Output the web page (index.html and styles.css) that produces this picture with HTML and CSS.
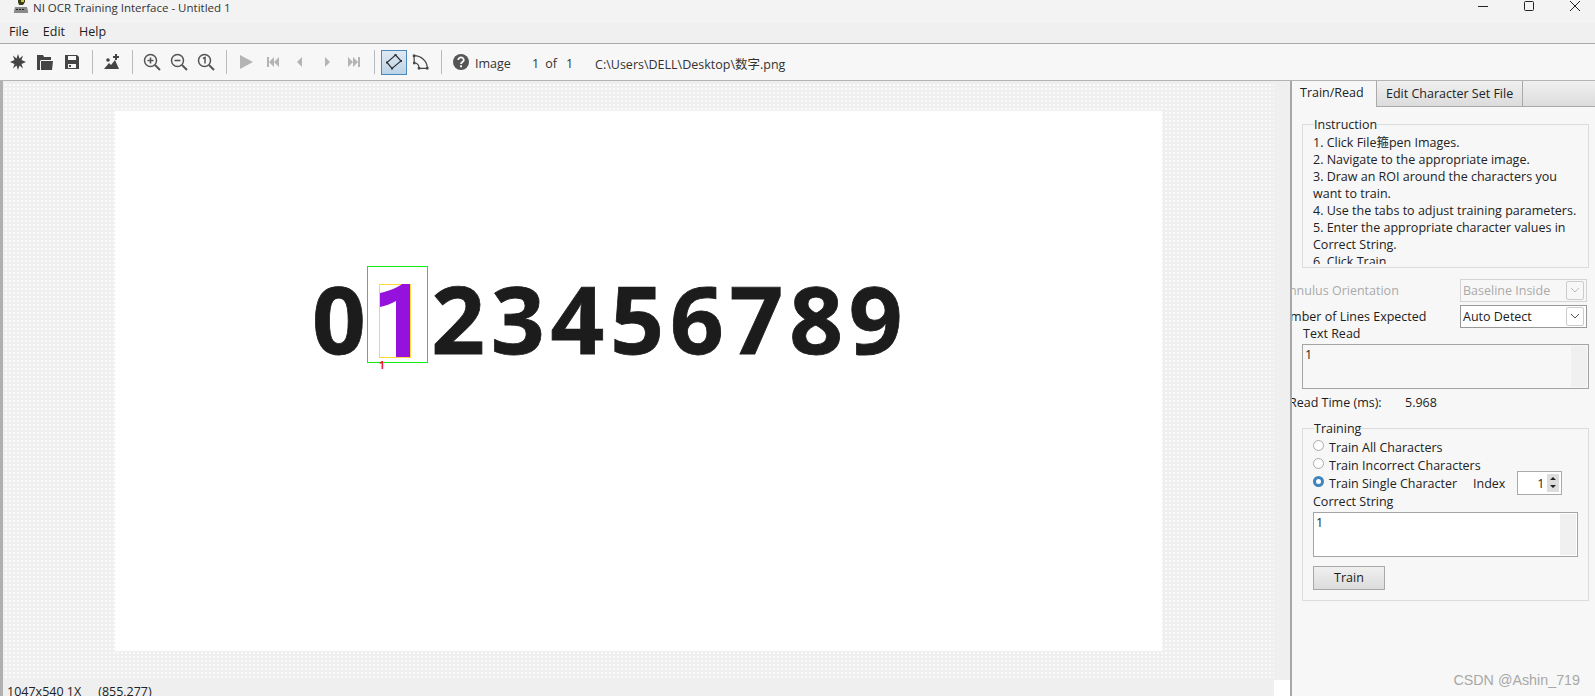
FILE: index.html
```html
<!DOCTYPE html>
<html lang="en">
<head>
    <meta charset="UTF-8">
    <title>NI OCR Training Interface - Untitled 1</title>
    <link rel="stylesheet" href="styles.css">
</head>
<body>
    <!-- title bar -->
    <div class="titlebar">
        <svg class="app-icon" width="16" height="15" viewBox="0 0 16 15">
            <path d="M5 0h7v3l-2 3H6L5 3z" fill="#3a3a1c"/>
            <path d="M8 0h3v3H8z" fill="#d8c030"/>
            <path d="M2 8h12l1 4v2H1v-2z" fill="#8a8a8a"/>
            <path d="M3 10h2v1H3zM6 10h2v1H6zM9 10h2v1H9z" fill="#222"/>
        </svg>
        <span class="title-text">NI OCR Training Interface - Untitled 1</span>
        <div class="win-buttons">
            <svg width="12" height="12" viewBox="0 0 12 12"><path d="M1 6.5h10" stroke="#222" fill="none"/></svg>
            <svg width="12" height="12" viewBox="0 0 12 12"><rect x="1.5" y="1.5" width="9" height="9" rx="1" stroke="#222" fill="none"/></svg>
            <svg width="12" height="12" viewBox="0 0 12 12"><path d="M1 1l10 10M11 1L1 11" stroke="#222" fill="none"/></svg>
        </div>
    </div>

    <!-- menu -->
    <div class="menubar">
        <span>File</span>
        <span>Edit</span>
        <span>Help</span>
    </div>

    <!-- toolbar -->
    <div class="toolbar">
        <svg class="tool" viewBox="0 0 18 18"><path d="M9 1l1.500 4.500L14 2.500l-1.500 4.500L17 9l-4.500 2L14 15.500 10.500 12.500 9 17l-1.500-4.500L4 15.500 5.500 11 1 9l4.500-2L4 2.500l3.500 3z" fill="#444"/></svg>
        <svg class="tool" viewBox="0 0 18 18"><path d="M1 2h6l1 2h7v3H5l-1 1v9H1zM5 8h12l-1 9H5z" fill="#444"/></svg>
        <svg class="tool" viewBox="0 0 18 18"><path d="M2 2h12l2 2v12H2z" fill="#444"/><path d="M5 3h8v4H5z" fill="#f7f7f7"/><path d="M5 11h8v4H5z" fill="#f7f7f7"/><path d="M6 12h2v2H6z" fill="#444"/></svg>
        <i class="sep"></i>
        <svg class="tool" viewBox="0 0 18 18"><circle cx="5" cy="7" r="1.800" fill="#444"/><path d="M1 16l5-6 2 2 4-5 4 9z" fill="#444"/><path d="M13 1v6M10 4h6" stroke="#444" stroke-width="2"/></svg>
        <i class="sep"></i>
        <svg class="tool" viewBox="0 0 18 18"><circle cx="7.500" cy="7.500" r="6" fill="none" stroke="#555" stroke-width="1.500"/><path d="M12 12l5 5" stroke="#555" stroke-width="2"/><path d="M7.500 4.500v6M4.500 7.500h6" stroke="#555" stroke-width="1.600"/></svg>
        <svg class="tool" viewBox="0 0 18 18"><circle cx="7.500" cy="7.500" r="6" fill="none" stroke="#555" stroke-width="1.500"/><path d="M12 12l5 5" stroke="#555" stroke-width="2"/><path d="M4.500 7.500h6" stroke="#555" stroke-width="1.600"/></svg>
        <svg class="tool" viewBox="0 0 18 18"><circle cx="7.500" cy="7.500" r="6" fill="none" stroke="#555" stroke-width="1.500"/><path d="M12 12l5 5" stroke="#555" stroke-width="2"/><path d="M6 5.500l2-1v6" fill="none" stroke="#555" stroke-width="1.500"/></svg>
        <i class="sep"></i>
        <svg class="tool" viewBox="0 0 18 18"><path d="M3 2l13 7-13 7z" fill="#b4b4b4"/></svg>
        <svg class="tool" viewBox="0 0 18 18"><path d="M3 4h2v10H3zM10 4v10L5 9zM15 4v10L10 9z" fill="#b4b4b4"/></svg>
        <svg class="tool" viewBox="0 0 18 18"><path d="M11 4v10L6 9z" fill="#b4b4b4"/></svg>
        <svg class="tool" viewBox="0 0 18 18"><path d="M7 4v10l5-5z" fill="#b4b4b4"/></svg>
        <svg class="tool" viewBox="0 0 18 18"><path d="M3 4v10l5-5zM8 4v10l5-5zM13 4h2v10h-2z" fill="#b4b4b4"/></svg>
        <i class="sep sep-tight"></i>
        <span class="tool-active">
            <svg width="18" height="18" viewBox="0 0 18 18"><path d="M10.500 2L16 8 7 15.500 2 9.500z" fill="none" stroke="#333" stroke-width="1.200"/><path d="M9.500 1h2v2h-2zM15 7h2v2h-2zM6 14.500h2v2H6zM1 8.500h2v2H1z" fill="#333"/></svg>
        </span>
        <svg class="tool roi" viewBox="0 0 18 18"><path d="M2 2.700C9 2.700 15.300 8 15.300 15.300H7C7 12 5 10 2.300 10z" fill="none" stroke="#444" stroke-width="1.200"/><path d="M.8 1.500h2.400v2.400H.8zM14.100 14.100h2.400v2.400h-2.400zM5.800 14.100h2.400v2.400H5.800zM1.100 8.800h2.400v2.400H1.100z" fill="#444"/></svg>
        <i class="sep"></i>
        <svg class="tool help" viewBox="0 0 18 18"><circle cx="9" cy="9" r="8" fill="#555"/><path d="M6.200 7c0-3.400 5.600-3.400 5.600 0 0 2-2.800 2-2.800 4" fill="none" stroke="#f7f7f7" stroke-width="1.800"/><path d="M8 12.300h2v2H8z" fill="#f7f7f7"/></svg>
        <span class="tool-label image-label">Image</span>
        <span class="tool-label count">1</span>
        <span class="tool-label of">of</span>
        <span class="tool-label count">1</span>
        <span class="tool-label path">C:\Users\DELL\Desktop\数字.png</span>
    </div>

    <div class="main">
        <!-- image view -->
        <div class="viewer">
            <div class="canvas">
                <div class="picture">
                    <span class="digits">0<span class="digit-hidden">1</span>23456789</span>
                    <div class="roi-box"></div>
                    <div class="char-box"></div>
                    <svg class="char-hit" width="30" height="73" viewBox="0 0 30 73"><path d="M0 9C9 7 17 4 22 0H30V73H16V17C11 20 5 22 0 23z" fill="#9512dc"/></svg>
                    <span class="char-index">1</span>
                </div>
            </div>
            <div class="statusbar">
                <span>1047x540 1X</span>
                <span>(855,277)</span>
                <i class="status-corner"></i>
            </div>
        </div>

        <!-- right panel -->
        <div class="panel">
            <div class="tabs">
                <span class="tab tab-on">Train/Read</span>
                <span class="tab">Edit Character Set File</span>
                <span class="tab-rest"></span>
            </div>

            <fieldset class="group instruction">
                <legend>Instruction</legend>
                <div class="instruction-text">
                    1. Click File箍pen Images.<br>
                    2. Navigate to the appropriate image.<br>
                    3. Draw an ROI around the characters you want to train.<br>
                    4. Use the tabs to adjust training parameters.<br>
                    5. Enter the appropriate character values in Correct String.<br>
                    6. Click Train.
                </div>
            </fieldset>

            <div class="row row-annulus">
                <span class="clip-label dim"><span class="clip-annulus">Annulus Orientation</span></span>
                <div class="combo combo-off">Baseline Inside<b class="combo-btn"><svg width="10" height="6" viewBox="0 0 10 6"><path d="M1 1l4 4 4-4" fill="none" stroke="#bbb"/></svg></b></div>
            </div>
            <div class="row row-lines">
                <span class="clip-label"><span class="clip-lines">Number of Lines Expected</span></span>
                <div class="combo">Auto Detect<b class="combo-btn"><svg width="10" height="6" viewBox="0 0 10 6"><path d="M1 1l4 4 4-4" fill="none" stroke="#555"/></svg></b></div>
            </div>

            <div class="field-label text-read-label">Text Read</div>
            <div class="textbox text-read">1<i class="scroll"></i></div>
            <div class="read-time">
                <span class="clip-label"><span class="clip-read">Read Time (ms):</span></span>
                <span class="read-value">5.968</span>
            </div>

            <fieldset class="group training">
                <legend>Training</legend>
                <div class="radio-row"><i class="radio"></i>Train All Characters</div>
                <div class="radio-row"><i class="radio"></i>Train Incorrect Characters</div>
                <div class="radio-row">
                    <i class="radio radio-on"></i>Train Single Character
                    <span class="index-label">Index</span>
                    <div class="spin">1<b class="spin-btns"><svg width="12" height="18" viewBox="0 0 12 18"><path d="M0 0h12v18H0z" fill="#ddd"/><path d="M3 6l3-3 3 3zM3 11h6l-3 3z" fill="#222"/></svg></b></div>
                </div>
                <div class="field-label correct-label">Correct String</div>
                <div class="textbox correct">1<i class="scroll"></i></div>
                <div class="button">Train</div>
            </fieldset>
            <div class="watermark">CSDN @Ashin_719</div>
        </div>
    </div>
</body>
</html>
```

FILE: styles.css
```css
/* base */
html, body {
    height: 100%;
}

body {
    margin: 0;
    width: 1595px;
    height: 696px;
    overflow: hidden;
    display: flex;
    flex-direction: column;
    font-family: "Open Sans", "Noto Sans CJK SC", sans-serif;
    font-size: 12.5px;
    color: #1c1c1c;
    background: #f7f7f7;
}

/* title bar */
.titlebar {
    height: 23px;
    flex: none;
    display: flex;
    align-items: flex-start;
    background: #f3f3f3;
    overflow: hidden;
}

.app-icon {
    margin: -1px 0 0 13px;
}

.title-text {
    margin-left: 4px;
    font-size: 11.5px;
    color: #333;
    line-height: 15px;
}

.win-buttons {
    margin-left: auto;
    display: flex;
    gap: 34px;
    padding: 0 14px 0 0;
}

/* menu */
.menubar {
    height: 20px;
    flex: none;
    display: flex;
    gap: 14px;
    padding-left: 9px;
    line-height: 18px;
    background: #f0f0f0;
    border-bottom: 1px solid #aaa;
}

/* toolbar */
.toolbar {
    height: 36px;
    flex: none;
    display: flex;
    align-items: center;
    padding-left: 9px;
    background: #f7f7f7;
    border-bottom: 1px solid #b4b4b4;
}

.tool {
    width: 18px;
    height: 18px;
    margin-right: 9px;
    flex: none;
}

.sep {
    width: 1px;
    height: 24px;
    margin: 0 10px 0 2px;
    background: #b8bcc0;
    flex: none;
}

.sep-tight {
    margin-right: 6px;
}

.tool-active {
    width: 26px;
    height: 25px;
    margin-right: 5px;
    display: flex;
    align-items: center;
    justify-content: center;
    box-sizing: border-box;
    background: linear-gradient(#dfe9f3, #bcd3e8);
    border: 1px solid #4d88bd;
    flex: none;
}

.help {
    margin-right: 3px;
}

.tool-label {
    margin-top: 2px;
    color: #333;
    white-space: nowrap;
}

.image-label {
    margin-left: 2px;
    width: 57px;
}

.of {
    margin: 2px 9px 0 6px;
}

.path {
    margin-left: 22px;
}

/* main area */
.main {
    flex: 1;
    min-height: 0;
    display: flex;
}

.viewer {
    width: 1290px;
    flex: none;
    display: flex;
    flex-direction: column;
    box-sizing: border-box;
    border-left: 3px solid #b0b0b0;
    background: #efefef;
}

.canvas {
    flex: 1;
    min-height: 0;
    margin: 3px 16px 0 0;
    padding: 27px 0 0 112px;
    background-color: #efefef;
    background-image: conic-gradient(#fbfbfb 25%, transparent 0);
    background-size: 4px 4px;
}

.picture {
    position: relative;
    width: 1047px;
    height: 540px;
    background: #fff;
}

.digits {
    position: absolute;
    left: 197px;
    top: 167px;
    font-family: "Open Sans", sans-serif;
    font-weight: 700;
    font-size: 94px;
    letter-spacing: 5.9px;
    -webkit-text-stroke: 0.8px;
    line-height: 80px;
    color: #1c1c1c;
    white-space: nowrap;
}

.digit-hidden {
    color: transparent;
}

/* overlays on the picture */
.roi-box {
    position: absolute;
    left: 252px;
    top: 155px;
    width: 59px;
    height: 95px;
    border: 1px solid #0fec0f;
}

.char-box {
    position: absolute;
    left: 264px;
    top: 173px;
    width: 30px;
    height: 72px;
    border: 1px solid #ffd83a;
}

.char-hit {
    position: absolute;
    left: 265px;
    top: 173px;
}

.char-index {
    position: absolute;
    left: 264px;
    top: 248px;
    font-size: 10px;
    font-weight: 700;
    line-height: 12px;
    color: #f01818;
}

.statusbar {
    height: 16px;
    flex: none;
    display: flex;
    gap: 17px;
    padding-left: 4px;
    line-height: 23px;
    overflow: hidden;
    color: #222;
}

.status-corner {
    margin-left: auto;
    width: 16px;
    background: #fff;
}

/* right panel */
.panel {
    flex: 1;
    min-width: 0;
    position: relative;
    box-sizing: border-box;
    border-left: 2px solid #a8a8a8;
    background: #f7f7f7;
    overflow: hidden;
}

.tabs {
    height: 26px;
    display: flex;
    align-items: stretch;
    margin-top: 0;
}

.tab {
    padding: 0 9px;
    line-height: 26px;
    box-sizing: border-box;
    background: linear-gradient(#f0f0f0, #dcdcdc);
    border-right: 1px solid #aaa;
    border-bottom: 1px solid #aaa;
    color: #222;
}

.tab-on {
    width: 85px;
    padding: 0 8px;
    line-height: 23px;
    background: #f7f7f7;
    border-bottom: 0;
}

.tab-rest {
    flex: 1;
    background: linear-gradient(#f0f0f0, #dcdcdc);
    border-bottom: 1px solid #aaa;
}

.group {
    margin: 0 6px 0 10px;
    padding: 0 10px;
    border: 1px solid #dcdcdc;
    min-inline-size: 0;
}

.group legend {
    padding: 0;
    margin-left: 1px;
    line-height: 15px;
    color: #222;
}

.instruction {
    margin-top: 10px;
    height: 151px;
    box-sizing: border-box;
}

.instruction-text {
    height: 130px;
    overflow: hidden;
    line-height: 17px;
    margin-top: 2px;
    color: #222;
}

/* rows with clipped labels */
.row {
    display: flex;
    align-items: center;
    padding-right: 8px;
}

.row-annulus {
    margin-top: 10px;
    height: 24px;
}

.row-lines {
    margin-top: 2px;
    height: 24px;
}

.clip-label {
    flex: 1;
    min-width: 0;
    overflow: hidden;
    white-space: nowrap;
}

.clip-label span {
    display: block;
}

.clip-annulus {
    margin-left: -11px;
}

.clip-lines {
    margin-left: -19px;
}

.clip-read {
    margin-left: -3px;
}

.dim {
    color: #aaa;
}

.combo {
    width: 127px;
    height: 23px;
    box-sizing: border-box;
    display: flex;
    align-items: center;
    justify-content: space-between;
    padding: 0 2px;
    border: 1px solid #999;
    background: #fff;
}

.combo-off {
    border-color: #d4d4d4;
    background: #f7f7f7;
    color: #aaa;
}

.combo-btn {
    width: 16px;
    height: 17px;
    display: flex;
    align-items: center;
    justify-content: center;
    border: 1px solid #ccc;
    border-radius: 2px;
}

.field-label {
    line-height: 15px;
    color: #222;
}

.text-read-label {
    margin: -2px 0 3px 11px;
}

.textbox {
    position: relative;
    box-sizing: border-box;
    height: 45px;
    border: 1px solid #a4a4a4;
    padding: 1px 2px;
    line-height: 18px;
}

.text-read {
    margin: 0 6px 0 10px;
    background: #f7f7f7;
}

.scroll {
    position: absolute;
    top: 1px;
    right: 1px;
    bottom: 1px;
    width: 16px;
    background: #f0f0f0;
}

.read-time {
    display: flex;
    height: 17px;
    margin-top: 5px;
    line-height: 17px;
}

.read-time .clip-label {
    flex: none;
    width: 113px;
}

/* training group */
.training {
    margin-top: 10px;
    height: 180px;
    padding-top: 2px;
    box-sizing: border-box;
}

.radio-row {
    display: flex;
    align-items: center;
    height: 18px;
    color: #222;
    white-space: nowrap;
}

.radio {
    width: 9px;
    height: 9px;
    margin: -3px 5px 0 0;
    border: 1px solid #aaa;
    border-radius: 50%;
    background: #fff;
    flex: none;
}

.radio-on {
    width: 5px;
    height: 5px;
    border: 3px solid #3f84bd;
}

.index-label {
    margin-left: 16px;
}

.spin {
    width: 45px;
    height: 24px;
    margin: 0 0 0 12px;
    box-sizing: border-box;
    display: flex;
    align-items: center;
    justify-content: flex-end;
    gap: 3px;
    padding-right: 2px;
    border: 1px solid #aaa;
    background: #fff;
}

.spin-btns {
    display: flex;
}

.correct-label {
    margin-top: 1px;
    line-height: 18px;
}

.correct {
    margin-top: 1px;
    background: #fff;
}

.button {
    width: 72px;
    height: 24px;
    margin-top: 9px;
    box-sizing: border-box;
    line-height: 22px;
    text-align: center;
    border: 1px solid #a8a8a8;
    background: linear-gradient(#f0f0f0, #dcdcdc);
}

.watermark {
    position: absolute;
    right: 15px;
    bottom: 8px;
    font-family: "Liberation Sans", sans-serif;
    font-size: 14.3px;
    color: #a8a8a8;
}
```
